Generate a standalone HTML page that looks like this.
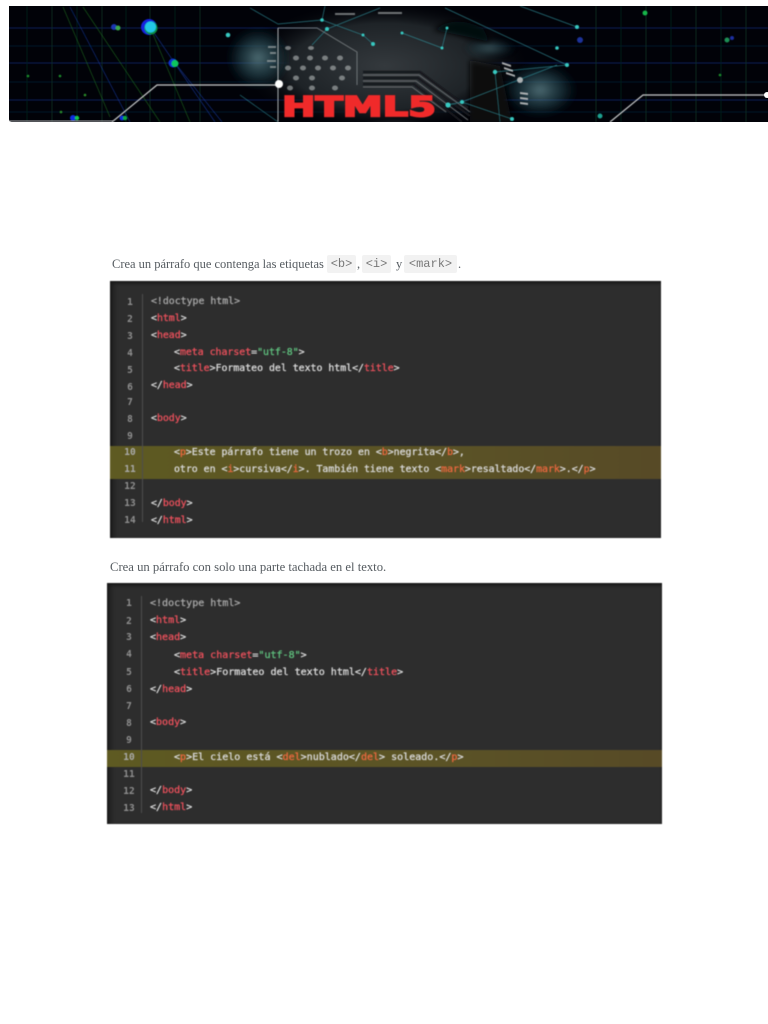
<!DOCTYPE html>
<html><head><meta charset="utf-8"><style>
html,body{margin:0;padding:0;background:#fff;width:768px;height:1024px;overflow:hidden}
#b{position:absolute;left:0;top:0}
.t{position:absolute;font-family:"Liberation Serif",serif;color:#555b60;white-space:pre;line-height:14px;filter:blur(.3px)}
.k{position:absolute;top:255px;height:18px;box-sizing:border-box;text-align:center;font-family:"Liberation Mono",monospace;font-size:12px;background:#f2f2f2;color:#777;border-radius:2px;line-height:18px;white-space:pre;filter:blur(.25px)}
.c{position:absolute;background:#2d2d2d;box-shadow:inset 6px 0 5px -3px #181818,inset 0 3px 3px -1px #161616;filter:blur(.4px)}
.hl{position:absolute;left:0;right:0}
.g{position:absolute;width:1px;background:#4d4d4d}
.n{position:absolute;width:24px;text-align:center;font:bold 9.5px/17px "DejaVu Sans Mono",monospace;color:#8f8f8f}
.l{position:absolute;font-family:"DejaVu Sans Mono",monospace;font-weight:normal;-webkit-text-stroke:.3px currentColor;white-space:pre;color:#d8d8d8;line-height:17px}
.a .l{font-size:9.87px}.z .l{font-size:10.03px}
i{font-style:normal;color:#e8505b}
u{text-decoration:none;color:#e8683f}
s{text-decoration:none;color:#a5a5a5}
em{font-style:normal;color:#5fc07e}
</style></head><body>
<svg id="b" width="768" height="125" viewBox="0 0 768 125">
<defs>
<radialGradient id="m" cx="50%" cy="50%" r="50%"><stop offset="0" stop-color="#34393d"/><stop offset=".65" stop-color="#1e2327"/><stop offset="1" stop-color="#020408" stop-opacity="0"/></radialGradient>
<radialGradient id="m2" cx="50%" cy="50%" r="50%"><stop offset="0" stop-color="#6f9aa2" stop-opacity=".7"/><stop offset=".6" stop-color="#2a5560" stop-opacity=".45"/><stop offset="1" stop-color="#0a2a33" stop-opacity="0"/></radialGradient>
<radialGradient id="m3" cx="50%" cy="100%" r="60%"><stop offset="0" stop-color="#8b9093"/><stop offset="1" stop-color="#555" stop-opacity="0"/></radialGradient>
<filter id="f"><feGaussianBlur stdDeviation=".45"/></filter>
<filter id="f2"><feGaussianBlur stdDeviation="3"/></filter>
<clipPath id="cp"><path d="M9 6H768V122H12Q9 122 9 119Z"/></clipPath>
</defs>
<g clip-path="url(#cp)">
<rect x="0" y="6" width="768" height="116" fill="#010208"/>
<g filter="url(#f)" fill="none" stroke-width="1">
<path d="M9 28H768M9 63H768M9 100H768" stroke="#0a1c58"/>
<path d="M9 46H768M9 82H768M9 112H768" stroke="#06122e"/>
<path d="M52 6V122M102 6V122M150 6V122M200 6V122M596 6V122M646 6V122M696 6V122M746 6V122" stroke="#0a2a1c"/>
<path d="M27 6V122M77 6V122M126 6V122M175 6V122M621 6V122M671 6V122M721 6V122" stroke="#061a14"/>
</g>
<ellipse cx="385" cy="66" rx="145" ry="66" fill="url(#m)"/>
<ellipse cx="258" cy="58" rx="32" ry="32" fill="url(#m2)" filter="url(#f2)"/>
<ellipse cx="540" cy="90" rx="38" ry="28" fill="url(#m2)" filter="url(#f2)"/>
<ellipse cx="490" cy="48" rx="26" ry="9" fill="url(#m2)" filter="url(#f2)" opacity=".7"/>
<path d="M433 30Q455 14 483 28L490 42Q465 36 433 30Z" fill="#05070a" filter="url(#f2)"/>
<path d="M470 60L500 66L512 122H470Z" fill="#0a0d10" filter="url(#f2)"/>
<ellipse cx="395" cy="122" rx="48" ry="16" fill="url(#m3)"/>
<g filter="url(#f)" fill="none">
<path d="M278 28H317L357 52V85" stroke="#6e7477" stroke-width="1"/>
<path d="M278 28V122" stroke="#a8adaf" stroke-width="1"/>
<g stroke="#14181b" stroke-width="2.2"><path d="M363 72H420L468 108M363 78H418L470 116M363 84H414L462 122"/></g>
<g stroke="#6a6e71" stroke-width="1"><path d="M363 75H419L470 112M363 81H416L468 120M363 87H412L446 112"/></g>
<g stroke="#2f8d99" stroke-width=".7" opacity=".8"><path d="M250 8L278 24L322 20M325 6L322 20L363 35L373 44M380 8L327 29L312 45M402 33L442 48M447 28L442 48M462 102L557 65M448 105L462 102L512 119M495 72L500 122M567 65L495 72M445 8L567 65M520 6L577 27M240 95L278 122"/></g>
<g stroke="#1d6c1c" stroke-width=".8" opacity=".7"><path d="M150 27L190 122M63 7L110 117M83 7L160 122"/></g>
<g stroke="#14369a" stroke-width=".8" opacity=".7"><path d="M150 27L215 122M175 63L222 122M70 7L130 122"/></g>
</g>
<g filter="url(#f)" fill="#aeb3b3" opacity=".62">
<ellipse cx="288" cy="48" rx="3" ry="2"/><ellipse cx="311" cy="48" rx="3" ry="2"/>
<ellipse cx="296" cy="58" rx="3" ry="2.500"/><ellipse cx="310" cy="58" rx="3" ry="2.500"/><ellipse cx="325" cy="58" rx="3" ry="2.500"/><ellipse cx="340" cy="58" rx="3" ry="2.500"/>
<ellipse cx="288" cy="68" rx="3" ry="2.500"/><ellipse cx="303" cy="68" rx="3" ry="2.500"/><ellipse cx="318" cy="68" rx="3" ry="2.500"/><ellipse cx="333" cy="68" rx="3" ry="2.500"/><ellipse cx="348" cy="68" rx="3" ry="2.500"/>
<ellipse cx="296" cy="78" rx="3" ry="2.500"/><ellipse cx="312" cy="78" rx="3" ry="2.500"/><ellipse cx="342" cy="78" rx="3" ry="2.500"/>
<ellipse cx="290" cy="88" rx="3" ry="2.500"/><ellipse cx="312" cy="88" rx="3" ry="2.500"/><ellipse cx="335" cy="88" rx="3" ry="2.500"/>
<rect x="268" y="46" width="8" height="2"/><rect x="270" y="52" width="6" height="2"/><rect x="267" y="60" width="9" height="2"/><rect x="270" y="66" width="6" height="2"/>
<rect x="335" y="13" width="20" height="2"/><rect x="378" y="12" width="24" height="2"/>
</g>
<g filter="url(#f)" fill="#c6c8c8" opacity=".85">
<path d="M502 62l9 3v2l-9-3zM504 67l9 3v2l-9-3zM506 72l9 3v2l-9-3zM520 92l8 1v2l-8-1zM520 97l8 1v2l-8-1zM520 102l8 1v2l-8-1z"/>
<circle cx="520" cy="80" r="3"/>
</g>
<g filter="url(#f)">
<circle cx="149" cy="27" r="8" fill="#1224e0"/><circle cx="151" cy="28" r="6.500" fill="#0c8f3f"/><circle cx="150.500" cy="27" r="5.500" fill="#21c7e8"/>
<circle cx="173" cy="63" r="4.500" fill="#0e32cc"/><circle cx="175" cy="63.500" r="3.500" fill="#10c65d"/>
<circle cx="114" cy="27" r="3" fill="#1c36b0"/><circle cx="118" cy="28" r="2.500" fill="#3aa648"/>
<circle cx="73" cy="118" r="3" fill="#0d2ee0"/><circle cx="77" cy="118" r="2.200" fill="#12c649"/>
<circle cx="122" cy="118" r="2.500" fill="#0d2ee0"/><circle cx="125" cy="118" r="2.200" fill="#0ea83e"/>
<g fill="#37c8c0">
<circle cx="228" cy="35" r="2.300"/><circle cx="322" cy="20" r="1.800"/><circle cx="327" cy="29" r="2"/><circle cx="363" cy="35" r="1.500"/><circle cx="373" cy="44" r="2"/><circle cx="402" cy="33" r="1.500"/><circle cx="442" cy="48" r="1.500"/><circle cx="447" cy="28" r="1.500"/><circle cx="495" cy="72" r="2.200"/><circle cx="567" cy="65" r="2"/><circle cx="557" cy="48" r="1.800"/><circle cx="462" cy="102" r="2"/><circle cx="448" cy="105" r="2.600"/><circle cx="512" cy="119" r="2"/><circle cx="577" cy="27" r="2"/><circle cx="600" cy="145" r="2"/>
</g>
<circle cx="645" cy="13" r="2.500" fill="#12b54a"/><circle cx="727" cy="40" r="2.500" fill="#1f8f55"/><circle cx="732" cy="38" r="2" fill="#1a2fa0"/><circle cx="580" cy="40" r="3" fill="#1c3198"/><circle cx="600" cy="145" r="2.500" fill="#1faf7f"/>
<circle cx="60" cy="76" r="1.300" fill="#1d8f2c"/><circle cx="28" cy="76" r="1.300" fill="#1d8f2c"/><circle cx="61" cy="112" r="1.300" fill="#2c8f2c"/><circle cx="85" cy="95" r="1.300" fill="#2c8f2c"/><circle cx="720" cy="75" r="1.300" fill="#1d8f2c"/><circle cx="628" cy="129" r="1.500" fill="#1d8f8f"/>
<circle cx="600" cy="116" r="2.500" fill="#1d9f8f"/>
</g>
<path d="M112 122L157 85H280" fill="none" stroke="#c8cacb" stroke-width="1.200" filter="url(#f)"/>
<path d="M610 122L643 95H768" fill="none" stroke="#c8cacb" stroke-width="1.200" filter="url(#f)"/>
<path d="M9 121H113" stroke="#a5a8aa" stroke-width="1"/>
<circle cx="279" cy="84" r="4" fill="#fff" filter="url(#f)"/>
<circle cx="767" cy="95" r="3" fill="#fff"/>
<text x="282" y="116" font-size="27.500" font-weight="bold" font-family="DejaVu Sans,sans-serif" fill="#f02a2a" stroke="#f02a2a" stroke-width="1.800" textLength="154" lengthAdjust="spacingAndGlyphs" filter="url(#f)">HTML5</text>
</g>
</svg>

<div class="t" style="left:112px;top:257px;font-size:12.480px">Crea un párrafo que contenga las etiquetas</div>
<div class="k" style="left:327px;width:29px">&lt;b&gt;</div>
<div class="t" style="left:357px;top:257px;font-size:12.480px">,</div>
<div class="k" style="left:362px;width:29px">&lt;i&gt;</div>
<div class="t" style="left:396px;top:257px;font-size:12.480px">y</div>
<div class="k" style="left:404px;width:53px">&lt;mark&gt;</div>
<div class="t" style="left:458px;top:257px;font-size:12.480px">.</div>

<div class="c a" style="left:110px;top:281px;width:551px;height:257px">
<div class="hl" style="top:165px;height:33px;background:linear-gradient(90deg,#5e5a22,#5b5326 60%,#574a26)"></div>
<div class="g" style="left:32px;top:13px;height:228px"></div>
<div class="n" style="left:8px;top:13px">1</div><div class="n" style="left:8px;top:30px">2</div><div class="n" style="left:8px;top:47px">3</div><div class="n" style="left:8px;top:64px">4</div><div class="n" style="left:8px;top:81px">5</div><div class="n" style="left:8px;top:98px">6</div><div class="n" style="left:8px;top:113px">7</div><div class="n" style="left:8px;top:130px">8</div><div class="n" style="left:8px;top:147px">9</div><div class="n" style="left:8px;top:163px;color:#aaa">10</div><div class="n" style="left:8px;top:180px;color:#aaa">11</div><div class="n" style="left:8px;top:197px">12</div><div class="n" style="left:8px;top:214px">13</div><div class="n" style="left:8px;top:231px">14</div>
<div class="l" style="left:41px;top:12px"><s>&lt;!doctype html&gt;</s></div>
<div class="l" style="left:41px;top:29px">&lt;<i>html</i>&gt;</div>
<div class="l" style="left:41px;top:46px">&lt;<i>head</i>&gt;</div>
<div class="l" style="left:64px;top:63px">&lt;<i>meta charset</i>=<em>"utf-8"</em>&gt;</div>
<div class="l" style="left:64px;top:79px">&lt;<i>title</i>&gt;Formateo del texto html&lt;/<i>title</i>&gt;</div>
<div class="l" style="left:41px;top:96px">&lt;/<i>head</i>&gt;</div>
<div class="l" style="left:41px;top:129px">&lt;<i>body</i>&gt;</div>
<div class="l" style="left:64px;top:163px">&lt;<u>p</u>&gt;Este párrafo tiene un trozo en &lt;<u>b</u>&gt;negrita&lt;/<u>b</u>&gt;,</div>
<div class="l" style="left:64px;top:180px">otro en &lt;<u>i</u>&gt;cursiva&lt;/<u>i</u>&gt;. También tiene texto &lt;<u>mark</u>&gt;resaltado&lt;/<u>mark</u>&gt;.&lt;/<u>p</u>&gt;</div>
<div class="l" style="left:41px;top:214px">&lt;/<i>body</i>&gt;</div>
<div class="l" style="left:41px;top:231px">&lt;/<i>html</i>&gt;</div>
</div>

<div class="t" style="left:110px;top:560px;font-size:12.680px">Crea un párrafo con solo una parte tachada en el texto.</div>

<div class="c z" style="left:107px;top:583px;width:555px;height:241px">
<div class="hl" style="top:167px;height:17px;background:linear-gradient(90deg,#5e5a22,#5b5326 60%,#574a26)"></div>
<div class="g" style="left:34px;top:13px;height:217px"></div>
<div class="n" style="left:10px;top:12px">1</div><div class="n" style="left:10px;top:30px">2</div><div class="n" style="left:10px;top:46px">3</div><div class="n" style="left:10px;top:63px">4</div><div class="n" style="left:10px;top:81px">5</div><div class="n" style="left:10px;top:98px">6</div><div class="n" style="left:10px;top:115px">7</div><div class="n" style="left:10px;top:132px">8</div><div class="n" style="left:10px;top:149px">9</div><div class="n" style="left:10px;top:166px;color:#aaa">10</div><div class="n" style="left:10px;top:183px">11</div><div class="n" style="left:10px;top:200px">12</div><div class="n" style="left:10px;top:217px">13</div>
<div class="l" style="left:43px;top:12px"><s>&lt;!doctype html&gt;</s></div>
<div class="l" style="left:43px;top:29px">&lt;<i>html</i>&gt;</div>
<div class="l" style="left:43px;top:46px">&lt;<i>head</i>&gt;</div>
<div class="l" style="left:67px;top:64px">&lt;<i>meta charset</i>=<em>"utf-8"</em>&gt;</div>
<div class="l" style="left:67px;top:81px">&lt;<i>title</i>&gt;Formateo del texto html&lt;/<i>title</i>&gt;</div>
<div class="l" style="left:43px;top:98px">&lt;/<i>head</i>&gt;</div>
<div class="l" style="left:43px;top:131px">&lt;<i>body</i>&gt;</div>
<div class="l" style="left:67px;top:166px">&lt;<u>p</u>&gt;El cielo está &lt;<u>del</u>&gt;nublado&lt;/<u>del</u>&gt; soleado.&lt;/<u>p</u>&gt;</div>
<div class="l" style="left:43px;top:199px">&lt;/<i>body</i>&gt;</div>
<div class="l" style="left:43px;top:216px">&lt;/<i>html</i>&gt;</div>
</div>
</body></html>
